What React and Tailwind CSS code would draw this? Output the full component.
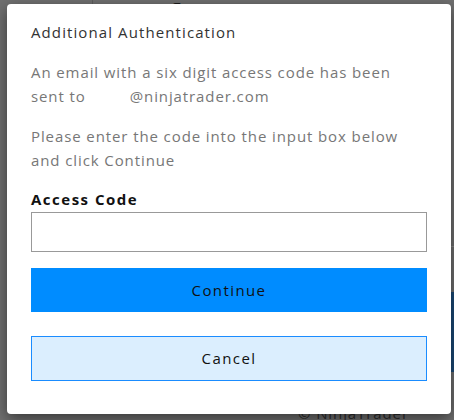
import React from "react";

const font = { fontFamily: '"Open Sans", "Liberation Sans", sans-serif' };

const AuthModal = () => (
  <div className="relative w-[444px] h-[410px] bg-white rounded-[4px] shadow-[0_5px_15px_rgba(0,0,0,0.5)] px-6 pt-[16px] flex flex-col tracking-[0.9px]">
    <h4 className="text-[15px] leading-6 tracking-[1.1px] text-[#333]">Additional Authentication</h4>

    <p className="mt-4 text-[15px] leading-6 text-[#777]">
      An email with a six digit access code has been sent to
      <span className="inline-block w-[44px]"></span>@ninjatrader.com
    </p>

    <p className="mt-4 text-[15px] leading-6 text-[#777]">
      Please enter the code into the input box below and click Continue
    </p>

    <label className="mt-[15px] mb-[1px] text-[15px] leading-6 font-bold tracking-[1.5px] text-[#111]">
      Access Code
    </label>
    <input
      type="text"
      className="w-full h-[40px] border border-[#999] bg-white px-2 outline-none"
    />

    <button className="mt-[16px] w-full h-[44px] bg-[#008cff] text-[15px] font-medium tracking-[1.4px] text-[#111]">
      Continue
    </button>

    <button className="mt-[24px] w-full h-[45px] bg-[#dbeefe] border border-[#1a8cff] text-[15px] font-medium tracking-[1.4px] text-[#111]">
      Cancel
    </button>
  </div>
);

export default function App() {
  return (
    <div className="relative w-full h-[420px] overflow-hidden bg-[#707070]" style={font}>
      {/* page behind the dimmed backdrop */}
      <div className="absolute left-[92px] top-0 w-px h-[4px] bg-[#5e5e5e]" />
      <div className="absolute left-[172px] -top-[6px] text-[15px] font-bold text-[#1a1a1a]">g</div>
      <div className="absolute left-[451px] top-[246px] w-[3px] h-px bg-[#8a8a8a]" />
      <div className="absolute left-[451px] top-[292px] w-[3px] h-[80px] bg-[#1b4a78]" />
      <div className="absolute left-[298px] top-[402px] text-[15px] tracking-[0.9px] text-[#2e2e2e]">© NinjaTrader</div>

      <div className="relative pl-[7px] pt-[4px]">
        <AuthModal />
      </div>
    </div>
  );
}
